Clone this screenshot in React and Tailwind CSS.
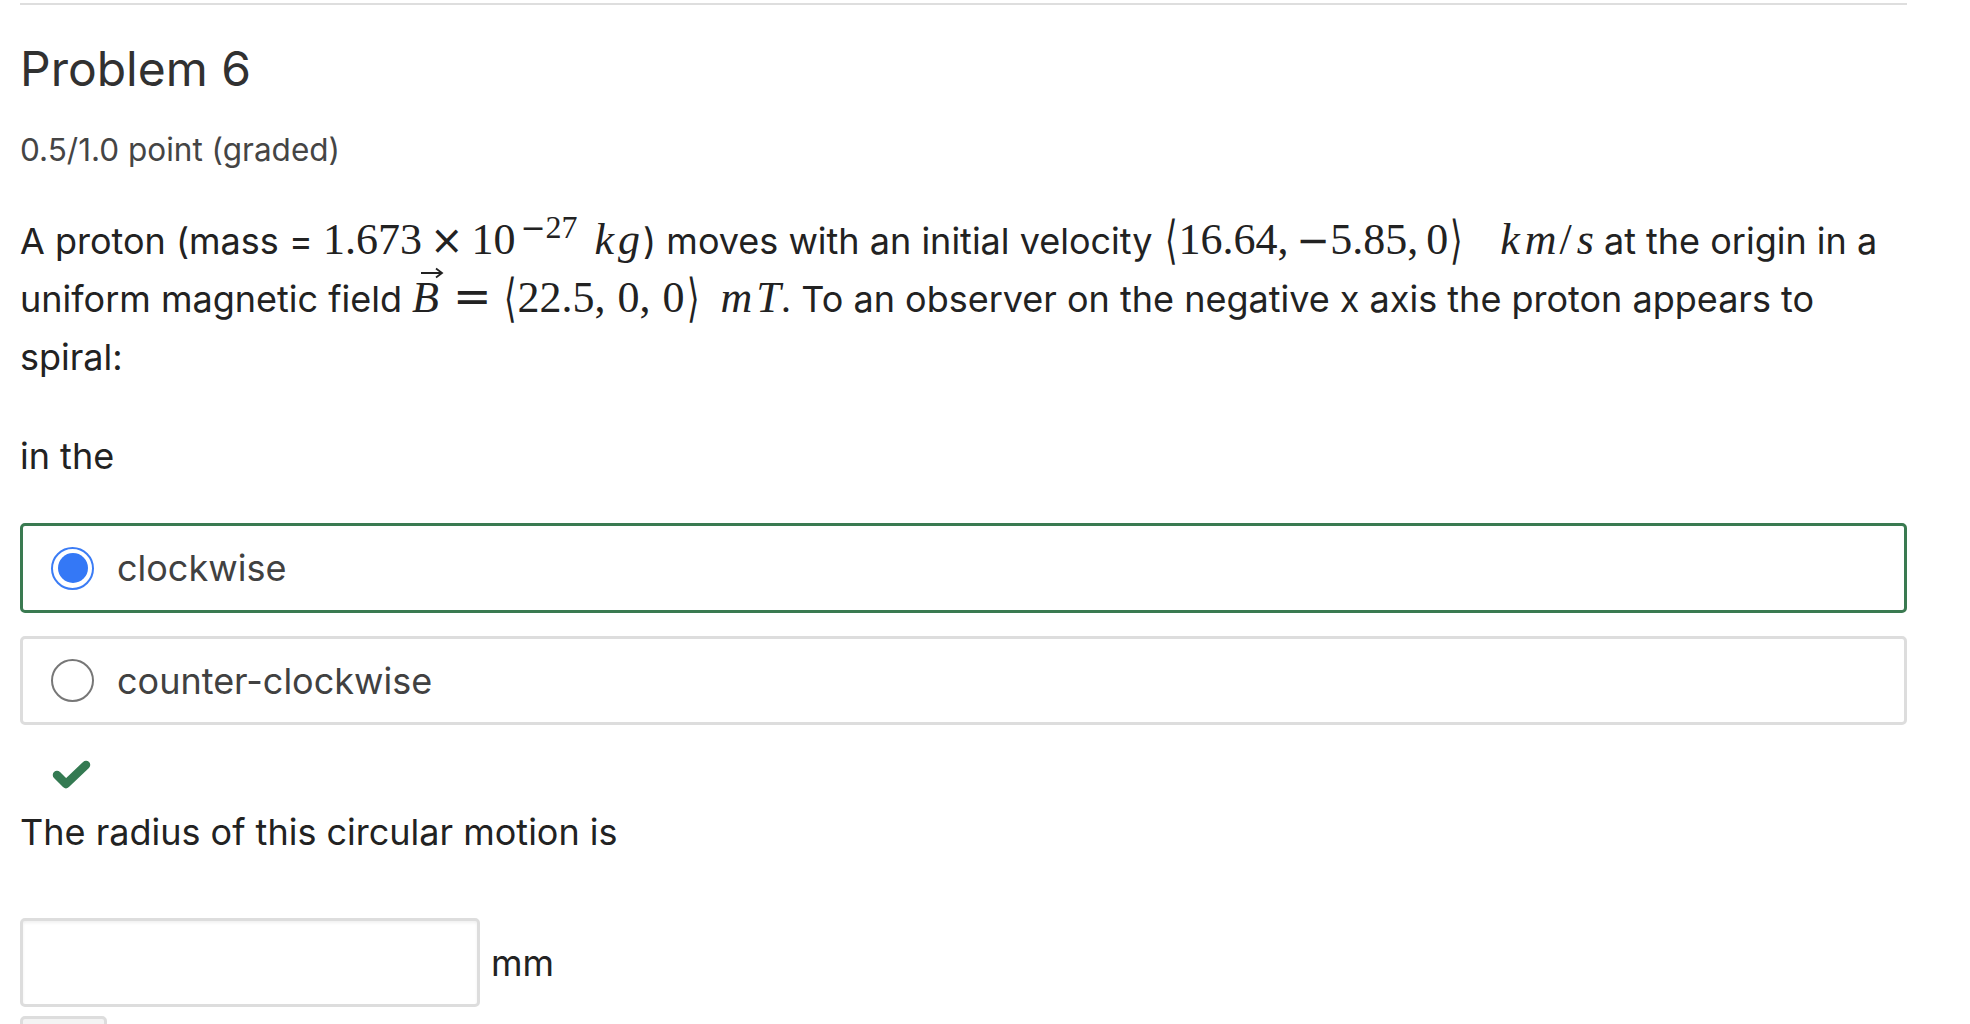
import React from "react";

const serif = "[font-family:'Liberation_Serif','DejaVu_Serif',serif]";
const M = ({ children }) => (
  <span className={"text-[44px] leading-none whitespace-nowrap " + serif}>{children}</span>
);
const I = ({ children, className = "" }) => (
  <i className={serif + " " + className}>{children}</i>
);
const Op = ({ c, className = "" }) => (
  <span className={"[font-family:'DejaVu_Sans',sans-serif] font-normal " + className}>{c}</span>
);
const L = () => (
  <span className="inline-block scale-y-[1.3] scale-x-[0.8] [font-family:'DejaVu_Sans',sans-serif] font-extralight text-[40px] leading-none">⟨</span>
);
const R = () => (
  <span className="inline-block scale-y-[1.3] scale-x-[0.8] [font-family:'DejaVu_Sans',sans-serif] font-extralight text-[40px] leading-none">⟩</span>
);

export default function App() {
  return (
    <div className="w-[1970px] h-[1024px] overflow-hidden bg-white [font-family:Inter,'Noto_Sans',sans-serif]">
      <div className="ml-[20px] w-[1887px]">
        <div className="mt-[3px] h-[2px] bg-[#dedede]" />
        <h2 className="mt-[34px] text-[48px] leading-[60px] font-normal text-[#313131]">Problem 6</h2>
        <div className="mt-[31px] text-[31.5px] leading-[40px] text-[#454545]">0.5/1.0 point (graded)</div>
        <p className="mt-[42px] text-[36px] leading-[58px] text-[#222222]">
          A proton (mass ={" "}
          <M>
            1.673<Op c="×" className="text-[40px] mx-[8px]" />10
            <sup className="text-[32px] relative -top-[16px] align-baseline leading-none ml-[5px]">
              <Op c="−" className="text-[30px]" />27
            </sup>
            <I className="ml-[17px] mr-[3px]"><span className="mr-[4px]">k</span>g</I>
          </M>
          ) moves with an initial velocity{" "}
          <M>
            <L />16.64,<span className="ml-[8px]"><Op c="−" className="text-[40px]" />5.85,</span>
            <span className="ml-[8px]">0</span><R />
            <span className="ml-[36px]"><I><span className="mr-[5px]">k</span>m</I><span className="ml-[3px] mr-[5px]">/</span><I>s</I></span>
          </M>{" "}
          at the origin in a uniform magnetic field{" "}
          <M>
            <span className="relative inline-block">
              <I className="mr-[4px]">B</I>
              <svg className="absolute left-[8px] -top-[9px]" width="24" height="12" viewBox="0 0 24 12">
                <path d="M1 6 H21 M16 1.5 L22 6 L16 10.5" fill="none" stroke="#222" strokeWidth="1.8" />
              </svg>
            </span>
            <Op c="=" className="text-[46px] mx-[10px]" />
            <L />22.5,<span className="ml-[12px]">0,</span><span className="ml-[12px]">0</span><R />
            <span className="ml-[20px]"><I><span className="mr-[4px]">m</span>T</I></span>
          </M>
          . To an observer on the negative x axis the proton appears to spiral:
        </p>
        <p className="mt-[41px] text-[36px] leading-[58px] text-[#222222]">in the</p>

        <label className="mt-[38px] flex items-center h-[90px] rounded-[5px] border-[3px] border-[#3a7a51] pl-[28px]">
          <span className="flex items-center justify-center w-[43px] h-[43px] rounded-full border-[2px] border-[#3b7cf5] bg-white">
            <span className="w-[30px] h-[30px] rounded-full bg-[#3478f6]" />
          </span>
          <span className="ml-[23px] text-[36px] text-[#414141]">clockwise</span>
        </label>

        <label className="mt-[23px] flex items-center h-[89px] rounded-[5px] border-[3px] border-[#dddddd] pl-[28px]">
          <span className="w-[43px] h-[43px] rounded-full border-[2px] border-[#777777] bg-white" />
          <span className="ml-[23px] text-[36px] text-[#414141]">counter-clockwise</span>
        </label>

        <div className="mt-[35px] ml-[32px]">
          <svg width="40" height="30" viewBox="0 0 40 30">
            <path d="M5 15 L14 24 L34 5" fill="none" stroke="#347a52" strokeWidth="8.5" strokeLinecap="round" strokeLinejoin="round" />
          </svg>
        </div>

        <p className="mt-[13px] text-[36px] leading-[58px] text-[#222222]">The radius of this circular motion is</p>

        <div className="mt-[57px] flex items-center">
          <input className="w-[460px] h-[89px] rounded-[5px] border-[3px] border-[#dddddd] shadow-[inset_0_2px_3px_rgba(0,0,0,0.06)] outline-none" />
          <span className="ml-[11px] text-[36px] text-[#222222]">mm</span>
        </div>

        <div className="mt-[9px] w-[87px] h-[40px] rounded-[5px] border-[3px] border-[#dddddd] bg-[#f4f4f4]" />
      </div>
    </div>
  );
}
